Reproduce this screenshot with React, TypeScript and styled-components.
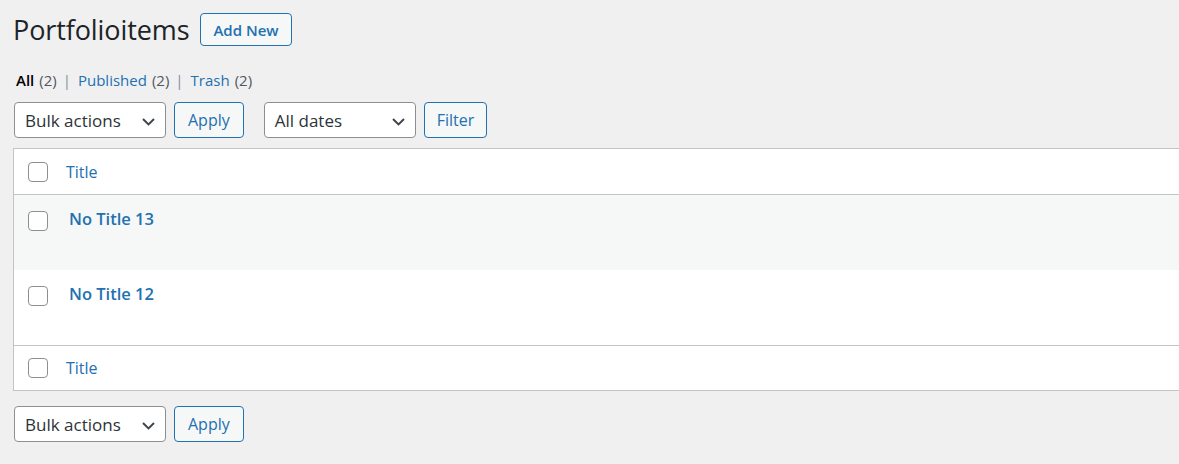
import styled, { createGlobalStyle } from 'styled-components'

const GlobalStyle = createGlobalStyle`
  html, body {
    margin: 0;
    padding: 0;
    background: #f0f0f1;
    overflow: hidden;
  }
  body {
    font-family: 'Open Sans', 'Liberation Sans', sans-serif;
    color: #1d2327;
  }
`

const Wrap = styled.div`
  padding-left: 13px;
  width: calc(100% + 40px);
  box-sizing: border-box;
`

const Header = styled.div`
  display: flex;
  align-items: center;
  gap: 11px;
  margin-top: 13px;
  height: 33px;
`

const Heading = styled.h1`
  margin: 0;
  font-size: 27px;
  font-weight: 400;
  line-height: 33px;
  letter-spacing: -0.1px;
`

const Button = styled.button`
  height: ${(p) => p.$h || 36}px;
  padding: 0 ${(p) => p.$px || 11}px;
  border: 1px solid #2271b1;
  border-radius: 4px;
  background: #f6f7f7;
  color: #2271b1;
  font-family: inherit;
  font-size: ${(p) => p.$fs || 16}px;
  font-weight: ${(p) => p.$fw || 400};
  cursor: pointer;
`

const Filters = styled.ul`
  display: flex;
  align-items: center;
  list-style: none;
  margin: 24px 0 0 3px;
  padding: 0;
  height: 20px;
  font-size: 15px;
`

const FilterItem = styled.li`
  display: flex;
  align-items: center;
  color: #50575e;
`

const FilterLink = styled.a`
  color: ${(p) => (p.$current ? '#000' : '#2271b1')};
  font-weight: ${(p) => (p.$current ? 600 : 400)};
  text-decoration: none;
  margin-right: 5px;
`

const Sep = styled.span`
  color: #7f8ea0;
  margin: 0 7px 0 6px;
`

const Count = styled.span`
  color: #50575e;
`

const Toolbar = styled.div`
  display: flex;
  align-items: center;
  margin: ${(p) => p.$mt}px 0 0 1px;
  height: 36px;
`

const Group = styled.div`
  display: flex;
  align-items: center;
  gap: 8px;
  margin-right: 20px;
`

const Select = styled.div`
  position: relative;
  box-sizing: border-box;
  width: ${(p) => p.$w}px;
  height: 36px;
  padding: 0 10px;
  display: flex;
  align-items: center;
  border: 1px solid #8c8f94;
  border-radius: 4px;
  background: #fff;
  font-size: 17px;
  color: #2c3338;
`

const Chevron = styled.svg`
  position: absolute;
  right: 10px;
  top: 15px;
`

const Table = styled.table`
  width: 100%;
  margin-top: 10px;
  border-collapse: collapse;
  background: #fff;
  border: 1px solid #c3c4c7;
`

const HeadCell = styled.td`
  height: ${(p) => p.$h}px;
  padding: 0;
  border-${(p) => p.$side}: 1px solid #c3c4c7;
`

const Row = styled.tr`
  background: ${(p) => (p.$alt ? '#f6f7f7' : '#fff')};
`

const RowCell = styled.td`
  height: 75px;
  padding: 0;
  vertical-align: top;
`

const Line = styled.div`
  display: flex;
  align-items: center;
  padding-left: 14px;
  padding-top: ${(p) => p.$pt || 0}px;
`

const Check = styled.span`
  box-sizing: border-box;
  width: 20px;
  height: 20px;
  border: 1px solid #8c8f94;
  border-radius: 4px;
  background: #fff;
  flex-shrink: 0;
`

const ColLink = styled.a`
  margin-left: ${(p) => p.$ml}px;
  color: #2271b1;
  font-size: ${(p) => (p.$bold ? 16.5 : 16)}px;
  font-weight: ${(p) => (p.$bold ? 600 : 400)};
  text-decoration: none;
  position: relative;
  top: ${(p) => p.$dy || 0}px;
`

const Arrow = () => (
  <Chevron width="13" height="8" viewBox="0 0 13 8">
    <path d="M1 1l5.5 5.5L12 1" fill="none" stroke="#3c434a" strokeWidth="1.9" />
  </Chevron>
)

const BulkActions = () => (
  <Group>
    <Select $w={152}>
      Bulk actions
      <Arrow />
    </Select>
    <Button $px={13}>Apply</Button>
  </Group>
)

const TitleCheckRow = () => (
  <Line>
    <Check />
    <ColLink $ml={18}>Title</ColLink>
  </Line>
)

const rows = ['No Title 13', 'No Title 12']

const App = () => {
  return (
    <>
      <GlobalStyle />
      <Wrap>
        <Header>
          <Heading>Portfolioitems</Heading>
          <Button $h={33} $fw={600} $px={12} $fs={15}>
            Add New
          </Button>
        </Header>
        <Filters>
          <FilterItem>
            <FilterLink $current href="#">All</FilterLink>
            <Count>(2)</Count>
            <Sep>|</Sep>
          </FilterItem>
          <FilterItem>
            <FilterLink href="#">Published</FilterLink>
            <Count>(2)</Count>
            <Sep>|</Sep>
          </FilterItem>
          <FilterItem>
            <FilterLink href="#">Trash</FilterLink>
            <Count>(2)</Count>
          </FilterItem>
        </Filters>
        <Toolbar $mt={12}>
          <BulkActions />
          <Group>
            <Select $w={152}>
              All dates
              <Arrow />
            </Select>
            <Button $px={12}>Filter</Button>
          </Group>
        </Toolbar>
        <Table>
          <thead>
            <tr>
              <HeadCell $h={45} $side="bottom">
                <TitleCheckRow />
              </HeadCell>
            </tr>
          </thead>
          <tbody>
            {rows.map((t, i) => (
              <Row key={t} $alt={i % 2 === 0}>
                <RowCell>
                  <Line $pt={14}>
                    <Check />
                    <ColLink $ml={21} $bold $dy={-2}>
                      {t}
                    </ColLink>
                  </Line>
                </RowCell>
              </Row>
            ))}
          </tbody>
          <tfoot>
            <tr>
              <HeadCell $h={44} $side="top">
                <TitleCheckRow />
              </HeadCell>
            </tr>
          </tfoot>
        </Table>
        <Toolbar $mt={15}>
          <BulkActions />
        </Toolbar>
      </Wrap>
    </>
  )
}

export default App
